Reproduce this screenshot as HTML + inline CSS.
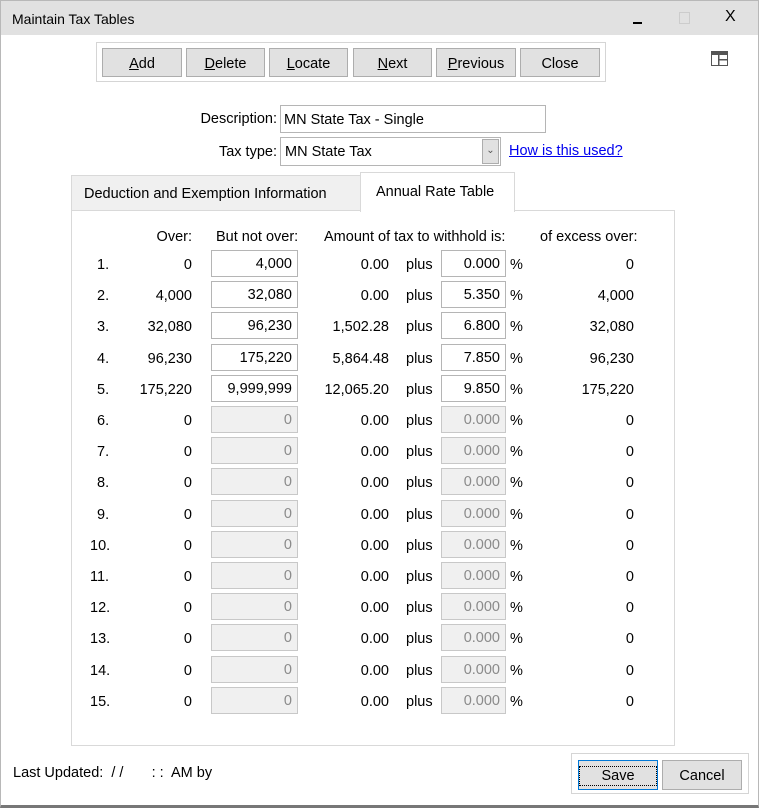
<!DOCTYPE html>
<html><head><meta charset="utf-8"><style>
*{box-sizing:border-box;margin:0;padding:0}
body{width:759px;height:808px;background:#fff;font-family:"Liberation Sans",sans-serif;font-size:14.5px;color:#000;position:relative;overflow:hidden}
.a{position:absolute;white-space:nowrap}
.win{position:absolute;left:0;top:0;width:759px;height:808px;border:1px solid #b8b8b8;border-bottom:3px solid #777}
.title{position:absolute;left:1px;top:1px;width:757px;height:34px;background:#e1e1e1}
.btn{position:absolute;top:48px;height:29px;background:#e1e1e1;border:1px solid #adadad;text-align:center;line-height:30px}
.in{position:absolute;border:1px solid #b5b5b5;background:#fff;height:27px;line-height:27px;text-align:right;padding-right:5px}
.dis{background:#f0f0f0;color:#8a8a8a;border-color:#c8c8c8}
.r{text-align:right}
.rw .a{top:7px}
</style></head><body>
<div class="win"></div>
<div class="title"></div>
<div class="a" style="left:12px;top:11px;font-size:14px">Maintain Tax Tables</div>
<div class="a" style="left:633px;top:22px;width:9px;height:2px;background:#000"></div>
<div class="a" style="left:679px;top:12px;width:11px;height:12px;border:1px solid #ccc"></div>
<div class="a" style="left:725px;top:8px;font-size:16px">X</div>

<div class="a" style="left:96px;top:42px;width:510px;height:40px;border:1px solid #d5d5d5"></div>
<div class="btn" style="left:102px;width:80px"><u>A</u>dd</div>
<div class="btn" style="left:186px;width:79px"><u>D</u>elete</div>
<div class="btn" style="left:269px;width:79px"><u>L</u>ocate</div>
<div class="btn" style="left:353px;width:79px"><u>N</u>ext</div>
<div class="btn" style="left:436px;width:80px"><u>P</u>revious</div>
<div class="btn" style="left:520px;width:80px">Close</div>
<svg class="a" style="left:711px;top:51px" width="17" height="15"><rect x="0.5" y="0.5" width="16" height="14" fill="#fff" stroke="#555"/><rect x="1" y="1" width="15" height="3" fill="#555"/><rect x="7" y="4" width="1.5" height="10" fill="#555"/><rect x="8" y="8" width="8" height="1.5" fill="#555"/></svg>

<div class="a r" style="left:150px;width:127px;top:111px">Description:</div>
<div class="a" style="left:280px;top:105px;width:266px;height:28px;border:1px solid #b5b5b5;padding-left:3px;line-height:28px">MN State Tax - Single</div>
<div class="a r" style="left:150px;width:127px;top:144px">Tax type:</div>
<div class="a" style="left:280px;top:137px;width:221px;height:29px;border:1px solid #b5b5b5;padding-left:4px;line-height:29px">MN State Tax</div>
<div class="a" style="left:482px;top:139px;width:17px;height:25px;background:#e1e1e1;border:1px solid #adadad;font-size:10px;text-align:center;line-height:22px;color:#555">&#8964;</div>
<div class="a" style="left:509px;top:143px;color:#0000ee;text-decoration:underline">How is this used?</div>

<div class="a" style="left:71px;top:175px;width:290px;height:36px;background:#f0f0f0;border:1px solid #d9d9d9;border-bottom:none"></div>
<div class="a" style="left:84px;top:186px">Deduction and Exemption Information</div>
<div class="a" style="left:71px;top:210px;width:604px;height:536px;border:1px solid #d9d9d9"></div>
<div class="a" style="left:360px;top:172px;width:155px;height:40px;background:#fff;border:1px solid #d9d9d9;border-bottom:none"></div>
<div class="a" style="left:376px;top:184px">Annual Rate Table</div>

<div class="a r" style="left:100px;width:92px;top:229px">Over:</div>
<div class="a" style="left:216px;top:229px">But not over:</div>
<div class="a" style="left:324px;top:229px">Amount of tax to withhold is:</div>
<div class="a" style="left:540px;top:229px">of excess over:</div>

<div class="rw" style="position:absolute;left:0;top:250px">
<div class="a" style="left:97px">1.</div><div class="a r" style="left:100px;width:92px">0</div><div class="in" style="left:211px;width:87px">4,000</div><div class="a r" style="left:300px;width:89px">0.00</div><div class="a" style="left:406px">plus</div><div class="in" style="left:441px;width:65px">0.000</div><div class="a" style="left:510px">%</div><div class="a r" style="left:530px;width:104px">0</div></div>
<div class="rw" style="position:absolute;left:0;top:281.2px">
<div class="a" style="left:97px">2.</div><div class="a r" style="left:100px;width:92px">4,000</div><div class="in" style="left:211px;width:87px">32,080</div><div class="a r" style="left:300px;width:89px">0.00</div><div class="a" style="left:406px">plus</div><div class="in" style="left:441px;width:65px">5.350</div><div class="a" style="left:510px">%</div><div class="a r" style="left:530px;width:104px">4,000</div></div>
<div class="rw" style="position:absolute;left:0;top:312.4px">
<div class="a" style="left:97px">3.</div><div class="a r" style="left:100px;width:92px">32,080</div><div class="in" style="left:211px;width:87px">96,230</div><div class="a r" style="left:300px;width:89px">1,502.28</div><div class="a" style="left:406px">plus</div><div class="in" style="left:441px;width:65px">6.800</div><div class="a" style="left:510px">%</div><div class="a r" style="left:530px;width:104px">32,080</div></div>
<div class="rw" style="position:absolute;left:0;top:343.6px">
<div class="a" style="left:97px">4.</div><div class="a r" style="left:100px;width:92px">96,230</div><div class="in" style="left:211px;width:87px">175,220</div><div class="a r" style="left:300px;width:89px">5,864.48</div><div class="a" style="left:406px">plus</div><div class="in" style="left:441px;width:65px">7.850</div><div class="a" style="left:510px">%</div><div class="a r" style="left:530px;width:104px">96,230</div></div>
<div class="rw" style="position:absolute;left:0;top:374.8px">
<div class="a" style="left:97px">5.</div><div class="a r" style="left:100px;width:92px">175,220</div><div class="in" style="left:211px;width:87px">9,999,999</div><div class="a r" style="left:300px;width:89px">12,065.20</div><div class="a" style="left:406px">plus</div><div class="in" style="left:441px;width:65px">9.850</div><div class="a" style="left:510px">%</div><div class="a r" style="left:530px;width:104px">175,220</div></div>
<div class="rw" style="position:absolute;left:0;top:406px">
<div class="a" style="left:97px">6.</div><div class="a r" style="left:100px;width:92px">0</div><div class="in dis" style="left:211px;width:87px">0</div><div class="a r" style="left:300px;width:89px">0.00</div><div class="a" style="left:406px">plus</div><div class="in dis" style="left:441px;width:65px">0.000</div><div class="a" style="left:510px">%</div><div class="a r" style="left:530px;width:104px">0</div></div>
<div class="rw" style="position:absolute;left:0;top:437.2px">
<div class="a" style="left:97px">7.</div><div class="a r" style="left:100px;width:92px">0</div><div class="in dis" style="left:211px;width:87px">0</div><div class="a r" style="left:300px;width:89px">0.00</div><div class="a" style="left:406px">plus</div><div class="in dis" style="left:441px;width:65px">0.000</div><div class="a" style="left:510px">%</div><div class="a r" style="left:530px;width:104px">0</div></div>
<div class="rw" style="position:absolute;left:0;top:468.4px">
<div class="a" style="left:97px">8.</div><div class="a r" style="left:100px;width:92px">0</div><div class="in dis" style="left:211px;width:87px">0</div><div class="a r" style="left:300px;width:89px">0.00</div><div class="a" style="left:406px">plus</div><div class="in dis" style="left:441px;width:65px">0.000</div><div class="a" style="left:510px">%</div><div class="a r" style="left:530px;width:104px">0</div></div>
<div class="rw" style="position:absolute;left:0;top:499.6px">
<div class="a" style="left:97px">9.</div><div class="a r" style="left:100px;width:92px">0</div><div class="in dis" style="left:211px;width:87px">0</div><div class="a r" style="left:300px;width:89px">0.00</div><div class="a" style="left:406px">plus</div><div class="in dis" style="left:441px;width:65px">0.000</div><div class="a" style="left:510px">%</div><div class="a r" style="left:530px;width:104px">0</div></div>
<div class="rw" style="position:absolute;left:0;top:530.8px">
<div class="a" style="left:90px">10.</div><div class="a r" style="left:100px;width:92px">0</div><div class="in dis" style="left:211px;width:87px">0</div><div class="a r" style="left:300px;width:89px">0.00</div><div class="a" style="left:406px">plus</div><div class="in dis" style="left:441px;width:65px">0.000</div><div class="a" style="left:510px">%</div><div class="a r" style="left:530px;width:104px">0</div></div>
<div class="rw" style="position:absolute;left:0;top:562px">
<div class="a" style="left:90px">11.</div><div class="a r" style="left:100px;width:92px">0</div><div class="in dis" style="left:211px;width:87px">0</div><div class="a r" style="left:300px;width:89px">0.00</div><div class="a" style="left:406px">plus</div><div class="in dis" style="left:441px;width:65px">0.000</div><div class="a" style="left:510px">%</div><div class="a r" style="left:530px;width:104px">0</div></div>
<div class="rw" style="position:absolute;left:0;top:593.2px">
<div class="a" style="left:90px">12.</div><div class="a r" style="left:100px;width:92px">0</div><div class="in dis" style="left:211px;width:87px">0</div><div class="a r" style="left:300px;width:89px">0.00</div><div class="a" style="left:406px">plus</div><div class="in dis" style="left:441px;width:65px">0.000</div><div class="a" style="left:510px">%</div><div class="a r" style="left:530px;width:104px">0</div></div>
<div class="rw" style="position:absolute;left:0;top:624.4px">
<div class="a" style="left:90px">13.</div><div class="a r" style="left:100px;width:92px">0</div><div class="in dis" style="left:211px;width:87px">0</div><div class="a r" style="left:300px;width:89px">0.00</div><div class="a" style="left:406px">plus</div><div class="in dis" style="left:441px;width:65px">0.000</div><div class="a" style="left:510px">%</div><div class="a r" style="left:530px;width:104px">0</div></div>
<div class="rw" style="position:absolute;left:0;top:655.6px">
<div class="a" style="left:90px">14.</div><div class="a r" style="left:100px;width:92px">0</div><div class="in dis" style="left:211px;width:87px">0</div><div class="a r" style="left:300px;width:89px">0.00</div><div class="a" style="left:406px">plus</div><div class="in dis" style="left:441px;width:65px">0.000</div><div class="a" style="left:510px">%</div><div class="a r" style="left:530px;width:104px">0</div></div>
<div class="rw" style="position:absolute;left:0;top:686.8px">
<div class="a" style="left:90px">15.</div><div class="a r" style="left:100px;width:92px">0</div><div class="in dis" style="left:211px;width:87px">0</div><div class="a r" style="left:300px;width:89px">0.00</div><div class="a" style="left:406px">plus</div><div class="in dis" style="left:441px;width:65px">0.000</div><div class="a" style="left:510px">%</div><div class="a r" style="left:530px;width:104px">0</div></div>

<div class="a" style="left:13px;top:765px">Last Updated:&nbsp; / /&nbsp;&nbsp;&nbsp;&nbsp;&nbsp;&nbsp; : :&nbsp; AM by</div>
<div class="a" style="left:571px;top:753px;width:178px;height:41px;border:1px solid #d5d5d5"></div>
<div class="a" style="left:578px;top:760px;width:80px;height:30px;background:#e1e1e1;border:1px solid #0078d7;text-align:center;line-height:30px"><span style="outline:1px dotted #000;outline-offset:1px;padding:0 20px">Save</span></div>
<div class="a" style="left:662px;top:760px;width:80px;height:30px;background:#e1e1e1;border:1px solid #adadad;text-align:center;line-height:30px">Cancel</div>
</body></html>
